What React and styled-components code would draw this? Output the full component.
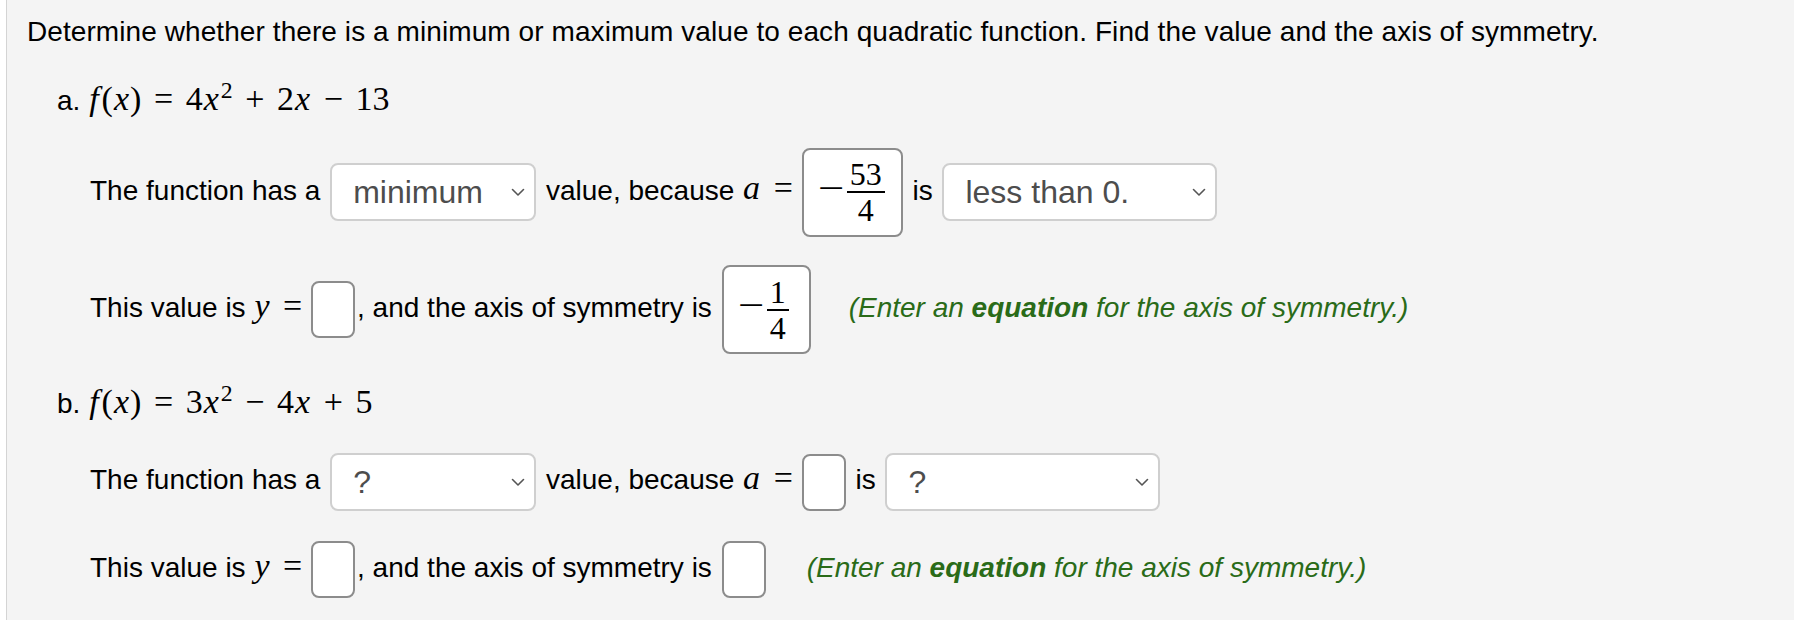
import React from 'react';
import styled, { createGlobalStyle } from 'styled-components';

const Global = createGlobalStyle`
  html, body { margin: 0; padding: 0; background: #ffffff; }
  body { font-family: "Liberation Sans", Arial, Helvetica, sans-serif; color: #000; }
`;

const Panel = styled.div`
  margin-left: 6px;
  min-height: 620px;
  box-sizing: border-box;
  background: #f4f4f4;
  border-left: 1px solid #d4d4d4;
  padding: 14px 0 0 20px;
  font-size: 28px;
`;

const Title = styled.div`
  line-height: 36px;
  letter-spacing: 0.08px;
`;

const PartLine = styled.div`
  margin-top: ${p => p.$mt}px;
  margin-left: 30px;
  height: 40px;
  display: flex;
  align-items: center;
`;

const Row = styled.div`
  margin-top: ${p => p.$mt}px;
  margin-left: 63px;
  height: ${p => p.$h}px;
  display: flex;
  align-items: center;
`;

const Line = styled.span`
  line-height: 36px;
  white-space: nowrap;
`;

const Math = styled.span`
  font-family: "Liberation Serif", "Times New Roman", serif;
  font-size: 34px;
  white-space: nowrap;
`;

const V = styled.i`
  font-style: italic;
  margin: 0 ${p => p.$mr || 1}px 0 ${p => p.$ml || 1}px;
`;

const Sup = styled.sup`
  font-size: 0.7em;
  vertical-align: 0.5em;
  line-height: 0;
  margin-left: 1px;
`;

const Op = styled.span`
  margin: 0 ${p => (p.$trail ? '0.2em' : '0.37em')} 0 0.37em;
`;

const Dropdown = styled.span`
  display: inline-flex;
  align-items: center;
  justify-content: space-between;
  vertical-align: middle;
  box-sizing: border-box;
  width: ${p => p.$w}px;
  height: 58px;
  margin: 0 2px;
  padding: 0 9px 0 21px;
  background: #fff;
  border: 2px solid #cfcfcf;
  border-radius: 8px;
  color: #4d4d4d;
  font-size: 32px;
`;

const Chevron = () => (
  <svg width="14" height="9" viewBox="0 0 14 9" fill="none">
    <polyline points="1.5,1.5 7,7 12.5,1.5" stroke="#555" strokeWidth="1.6" strokeLinecap="round" strokeLinejoin="round" />
  </svg>
);

const AnswerBox = styled.span`
  display: inline-flex;
  align-items: center;
  justify-content: center;
  vertical-align: middle;
  box-sizing: border-box;
  min-width: 44px;
  height: ${p => (p.$tall ? 89 : 57)}px;
  margin: 0 2px;
  padding: ${p => (p.$tall ? `0 ${p.$pr}px 0 15px` : '0')};
  background: #fff;
  border: 2px solid #8c8c8c;
  border-radius: 8px;
`;

const FracGroup = styled.span`
  display: block;
  font-family: "Liberation Serif", "Times New Roman", serif;
  font-size: 34px;
  line-height: 1;
  white-space: nowrap;
`;

const Minus = styled.span`
  display: inline-block;
  width: 24px;
  text-align: center;
  font-size: 36px;
  margin-right: 4px;
  transform: scaleX(1.3);
`;

const Frac = styled.span`
  display: inline-flex;
  flex-direction: column;
  align-items: stretch;
  vertical-align: middle;
  text-align: center;
  font-size: 32px;
  line-height: 34px;
`;

const FracBar = styled.span`
  display: block;
  height: 2px;
  background: #000;
`;

const FracPart = styled.span`
  display: block;
  padding: 0 3px;
`;

const Hint = styled.span`
  margin-left: ${p => p.$ml}px;
  font-style: italic;
  color: #2a6b18;
  white-space: nowrap;
`;

const HintBold = styled.b`
  font-weight: 700;
`;

const Fraction = ({ num, den }) => (
  <FracGroup>
    <Minus>−</Minus>
    <Frac>
      <FracPart>{num}</FracPart>
      <FracBar />
      <FracPart>{den}</FracPart>
    </Frac>
  </FracGroup>
);

const HintText = ({ ml }) => (
  <Hint $ml={ml}>
    (Enter an <HintBold>equation</HintBold> for the axis of symmetry.)
  </Hint>
);

export default function App() {
  return (
    <>
      <Global />
      <Panel>
        <Title>
          Determine whether there is a minimum or maximum value to each quadratic function. Find the value and the axis of symmetry.
        </Title>

        <PartLine $mt={30}>
          <Line>
            a.{' '}
            <Math>
              <V $mr={3}>f</V>(<V>x</V>)<Op>=</Op>4<V>x</V>
              <Sup>2</Sup>
              <Op>+</Op>2<V>x</V>
              <Op>−</Op>13
            </Math>
          </Line>
        </PartLine>

        <Row $mt={28} $h={88}>
          <Line>
            The function has a{' '}
            <Dropdown $w={206}>
              minimum
              <Chevron />
            </Dropdown>{' '}
            value, because <Math><V>a</V><Op $trail>=</Op></Math>
            <AnswerBox $tall $pr={16}>
              <Fraction num="53" den="4" />
            </AnswerBox>{' '}
            is{' '}
            <Dropdown $w={275}>
              less than 0.
              <Chevron />
            </Dropdown>
          </Line>
        </Row>

        <Row $mt={29} $h={89}>
          <Line>
            This value is <Math><V>y</V><Op $trail>=</Op></Math>
            <AnswerBox />, and the axis of symmetry is{' '}
            <AnswerBox $tall $pr={20}>
              <Fraction num="1" den="4" />
            </AnswerBox>
            <HintText ml={36} />
          </Line>
        </Row>

        <PartLine $mt={29}>
          <Line>
            b.{' '}
            <Math>
              <V $mr={3}>f</V>(<V>x</V>)<Op>=</Op>3<V>x</V>
              <Sup>2</Sup>
              <Op>−</Op>4<V>x</V>
              <Op>+</Op>5
            </Math>
          </Line>
        </PartLine>

        <Row $mt={30} $h={58}>
          <Line>
            The function has a{' '}
            <Dropdown $w={206}>
              ?
              <Chevron />
            </Dropdown>{' '}
            value, because <Math><V>a</V><Op $trail>=</Op></Math>
            <AnswerBox />{' '}
            is{' '}
            <Dropdown $w={275}>
              ?
              <Chevron />
            </Dropdown>
          </Line>
        </Row>

        <Row $mt={30} $h={57}>
          <Line>
            This value is <Math><V>y</V><Op $trail>=</Op></Math>
            <AnswerBox />, and the axis of symmetry is{' '}
            <AnswerBox />
            <HintText ml={39} />
          </Line>
        </Row>
      </Panel>
    </>
  );
}
